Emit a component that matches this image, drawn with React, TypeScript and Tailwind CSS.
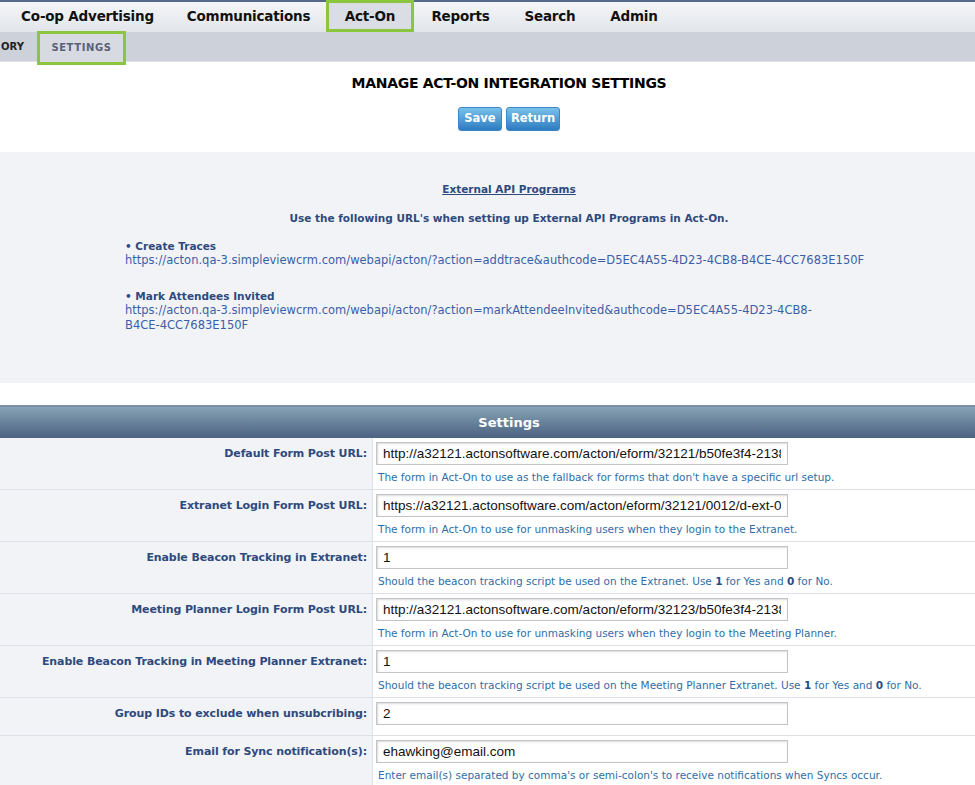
import React from "react";

const navItems = [
  { label: "Co-op Advertising", w: "w-[167px]" },
  { label: "Communications", w: "w-[155px]" },
  { label: "Act-On", w: "w-[88px]", active: true },
  { label: "Reports", w: "w-[93px]" },
  { label: "Search", w: "w-[86px]" },
  { label: "Admin", w: "w-[82px]" },
];

type Row = { label: string; value: string; help?: React.ReactNode };

const rows: Row[] = [
  {
    label: "Default Form Post URL:",
    value: "http://a32121.actonsoftware.com/acton/eform/32121/b50fe3f4-2138-4a55-9c1e-000000000000",
    help: "The form in Act-On to use as the fallback for forms that don't have a specific url setup.",
  },
  {
    label: "Extranet Login Form Post URL:",
    value: "https://a32121.actonsoftware.com/acton/eform/32121/0012/d-ext-0001",
    help: "The form in Act-On to use for unmasking users when they login to the Extranet.",
  },
  {
    label: "Enable Beacon Tracking in Extranet:",
    value: "1",
    help: (
      <>
        Should the beacon tracking script be used on the Extranet. Use <b>1</b> for Yes and <b>0</b> for No.
      </>
    ),
  },
  {
    label: "Meeting Planner Login Form Post URL:",
    value: "http://a32121.actonsoftware.com/acton/eform/32123/b50fe3f4-2138-4a55-9c1e-000000000000",
    help: "The form in Act-On to use for unmasking users when they login to the Meeting Planner.",
  },
  {
    label: "Enable Beacon Tracking in Meeting Planner Extranet:",
    value: "1",
    help: (
      <>
        Should the beacon tracking script be used on the Meeting Planner Extranet. Use <b>1</b> for Yes and{" "}
        <b>0</b> for No.
      </>
    ),
  },
  { label: "Group IDs to exclude when unsubcribing:", value: "2" },
  {
    label: "Email for Sync notification(s):",
    value: "ehawking@email.com",
    help: "Enter email(s) separated by comma's or semi-colon's to receive notifications when Syncs occur.",
  },
];

const verdana = "font-['DejaVu_Sans',Verdana,sans-serif]";

export default function App() {
  return (
    <div className={`w-[975px] h-[785px] overflow-hidden bg-white ${verdana}`}>
      {/* Top nav */}
      <div className="h-[32px] border-t-2 border-[#56698a] bg-gradient-to-b from-[#f4f5f7] to-[#e2e5ea] flex pl-[4px]">
        {navItems.map((n) => (
          <div
            key={n.label}
            className={`${n.w} flex items-center justify-center text-[13.5px] font-bold text-[#111] tracking-[-0.2px] ${
              n.active ? "border-[3px] border-[#8cc63f] bg-[#dadde3] -mt-[2px] h-[32px]" : "h-[30px] pb-[1px]"
            }`}
          >
            {n.label}
          </div>
        ))}
      </div>
      {/* Sub nav */}
      <div className="h-[30px] bg-[#cdd2da] border-b border-[#dfe2e8] flex items-center relative">
        <div className="w-[37px] text-[10px] font-bold text-[#222] overflow-hidden whitespace-nowrap flex justify-end pr-[13px]">
          ORY
        </div>
        <div className="w-[89px] h-[34px] mt-[2px] border-[3px] border-[#8cc63f] bg-[#d7dbe1] flex items-center justify-center text-[10px] font-bold text-[#5b6078] tracking-[0.6px]">
          SETTINGS
        </div>
      </div>
      {/* Title area */}
      <div className="h-[90px] bg-white flex flex-col items-center pt-[11px]">
        <h1 className="text-[14px] font-bold text-black tracking-[-0.3px] pl-[43px]">
          MANAGE ACT-ON INTEGRATION SETTINGS
        </h1>
        <div className="flex gap-[4px] mt-[13px] pl-[43px]">
          <button className="h-[24px] w-[44px] rounded-[3px] border border-[#3b86c4] bg-gradient-to-b from-[#79c0ea] to-[#2b7cc1] text-white text-[11.5px] font-bold">
            Save
          </button>
          <button className="h-[24px] w-[54px] rounded-[3px] border border-[#3b86c4] bg-gradient-to-b from-[#79c0ea] to-[#2b7cc1] text-white text-[11.5px] font-bold">
            Return
          </button>
        </div>
      </div>
      {/* External API */}
      <div className="h-[231px] bg-[#f2f3f7] pt-[24px]">
        <div className="text-center pl-[43px]">
          <span className="text-[10.5px] font-bold text-[#2e4a7d] underline">External API Programs</span>
        </div>
        <div className="text-center pl-[43px] mt-[11px] text-[10.5px] font-bold text-[#2e4a7d]">
          Use the following URL's when setting up External API Programs in Act-On.
        </div>
        <div className="pl-[125px] pr-[60px] mt-[12px]">
          <div className="text-[10.5px] font-bold text-[#2e4a7d] leading-[14px]">• Create Traces</div>
          <div className="text-[11.5px] text-[#3b5fa6] leading-[15px] whitespace-nowrap">
            https://acton.qa-3.simpleviewcrm.com/webapi/acton/?action=addtrace&amp;authcode=D5EC4A55-4D23-4CB8-B4CE-4CC7683E150F
          </div>
          <div className="text-[10.5px] font-bold text-[#2e4a7d] leading-[14px] mt-[21px]">• Mark Attendees Invited</div>
          <div className="text-[11.5px] text-[#3b5fa6] leading-[15px]">
            https://acton.qa-3.simpleviewcrm.com/webapi/acton/?action=markAttendeeInvited&amp;authcode=D5EC4A55-4D23-4CB8-
            <br />
            B4CE-4CC7683E150F
          </div>
        </div>
      </div>
      <div className="h-[22px] bg-white" />
      {/* Settings header */}
      <div className="h-[33px] border-t-2 border-[#7b8ca5] bg-gradient-to-b from-[#88a3b5] to-[#4b6281] flex items-center justify-center">
        <span className="text-[13px] font-bold text-white pl-[43px]">Settings</span>
      </div>
      {/* Rows */}
      <div>
        {rows.map((r) => (
          <div
            key={r.label}
            className={`flex border-b border-[#dde0e6] overflow-hidden ${r.help ? "h-[52px]" : "h-[38px]"}`}
          >
            <div className="w-[372px] shrink-0 bg-[#f2f3f7] text-right pr-[5px] pt-[8px] text-[11px] font-bold text-[#2e4a7d] tracking-[-0.1px]">
              {r.label}
            </div>
            <div className="flex-1 border-l border-[#dde0e6] pl-[3px] pt-[4px]">
              <input
                readOnly
                value={r.value}
                className="block w-[412px] h-[23px] border border-[#c4c4c4] shadow-[inset_1px_1px_2px_rgba(0,0,0,0.15)] bg-white px-[6px] font-['Liberation_Sans',Arial,sans-serif] text-[13.5px] text-[#111] outline-none"
              />
              {r.help && (
                <div className="mt-[6px] text-[10.5px] text-[#2f6ea6] leading-[13px] pl-[2px] whitespace-nowrap [&_b]:text-[#1f4f8a]">
                  {r.help}
                </div>
              )}
            </div>
          </div>
        ))}
      </div>
    </div>
  );
}
